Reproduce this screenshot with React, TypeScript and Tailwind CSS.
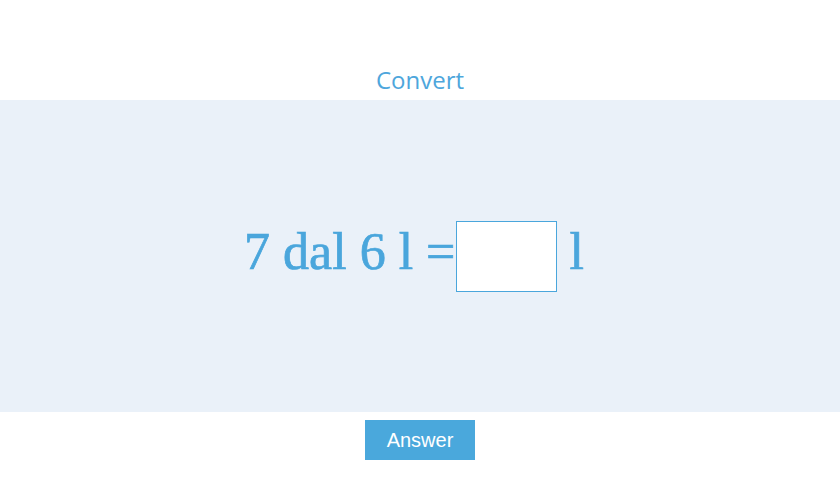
export default function App() {
  return (
    <div className="w-[840px] h-[501px] bg-white flex flex-col">
      <div className="h-[100px] flex items-end justify-center pb-[8px]">
        <h1 className="text-[24px] leading-none text-[#4ea6dc] font-['Open_Sans',sans-serif]">Convert</h1>
      </div>
      <div className="h-[312px] bg-[#eaf1f9] flex items-center justify-center pr-[12px]">
        <div className="flex items-center gap-[12px] text-[#4aa6dc] font-['Liberation_Serif',serif] text-[52px] leading-none">
          <span className="whitespace-pre pb-[8px] [-webkit-text-stroke:0.7px_#4aa6dc]">7 dal 6 l =</span>
          <div className="w-[101px] h-[71px] bg-white border-[1.5px] border-solid border-[#4aa6dc] -ml-[11px]"></div>
          <span className="pb-[8px] [-webkit-text-stroke:0.7px_#4aa6dc]">l</span>
        </div>
      </div>
      <div className="flex justify-center pt-[8px]">
        <button className="w-[110px] h-[40px] bg-[#4aa8dc] text-white text-[20px] font-['Liberation_Sans',sans-serif]">
          Answer
        </button>
      </div>
    </div>
  )
}
